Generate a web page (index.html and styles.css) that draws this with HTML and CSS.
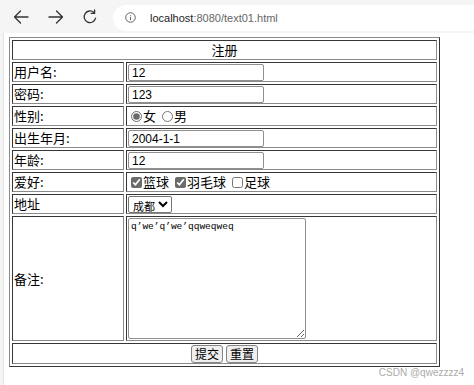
FILE: index.html
```html
<!DOCTYPE html>
<html lang="zh-CN">
<head>
  <meta charset="UTF-8" />
  <title>注册</title>
  <link rel="stylesheet" href="styles.css">
</head>
<body>

<div class="toolbar">
  <svg class="nav-icon back" viewBox="0 0 16 16"><path d="M15 8H1.5 M7.5 2L1.5 8l6 6"/></svg>
  <svg class="nav-icon fwd" viewBox="0 0 16 16"><path d="M1 8h13.5 M8.5 2l6 6-6 6"/></svg>
  <svg class="nav-icon reload" viewBox="0 0 16 16"><path d="M13.6 9.2A5.8 5.8 0 1 1 12 3.6 M12.6 1v3.4H9.2"/></svg>
  <div class="omnibox">
    <svg class="info" viewBox="0 0 12 12"><circle cx="6" cy="6" r="5.2"/><path d="M6 5.2v3.6 M6 3.2v.9"/></svg>
    <span class="host">localhost</span><span class="path">:8080/text01.html</span>
  </div>
</div>

<div class="page">
  <form>
    <table class="reg">
      <tr><td colspan="2" class="title">注册</td></tr>
      <tr>
        <td class="label">用户名:</td>
        <td><input type="text" value="12"></td>
      </tr>
      <tr>
        <td class="label">密码:</td>
        <td><input type="text" value="123"></td>
      </tr>
      <tr>
        <td class="label">性别:</td>
        <td>
          <label><input type="radio" name="sex" checked>女</label>
          <label><input type="radio" name="sex">男</label>
        </td>
      </tr>
      <tr>
        <td class="label">出生年月:</td>
        <td><input type="text" value="2004-1-1"></td>
      </tr>
      <tr>
        <td class="label">年龄:</td>
        <td><input type="text" value="12"></td>
      </tr>
      <tr>
        <td class="label">爱好:</td>
        <td>
          <label><input type="checkbox" checked>篮球</label>
          <label><input type="checkbox" checked>羽毛球</label>
          <label><input type="checkbox">足球</label>
        </td>
      </tr>
      <tr>
        <td class="label">地址</td>
        <td>
          <select>
            <option>成都</option>
            <option>北京</option>
          </select>
        </td>
      </tr>
      <tr>
        <td class="label">备注:</td>
        <td><textarea>q’we’q’we’qqweqweq</textarea></td>
      </tr>
      <tr class="actions">
        <td colspan="2">
          <button type="submit">提交</button>
          <button type="reset">重置</button>
        </td>
      </tr>
    </table>
  </form>

  <div class="watermark">CSDN @qwezzzz4</div>
</div>

</body>
</html>
```

FILE: styles.css
```css
* { box-sizing: border-box; }

body {
  margin: 0;
  height: 385px;
  overflow: hidden;
  font-family: "Noto Sans CJK SC", sans-serif;
  background: #f5f5f5;
  color: #000;
}

/* browser chrome */
.toolbar {
  display: flex;
  align-items: center;
  height: 33px;
  padding-left: 13px;
}

.nav-icon {
  width: 16px;
  height: 16px;
  fill: none;
  stroke: #333;
  stroke-width: 1.3;
  stroke-linecap: round;
  stroke-linejoin: round;
}

.nav-icon.back { margin-right: 19px; }
.nav-icon.fwd { margin-right: 18px; }
.nav-icon.reload { margin-right: 15px; }

.omnibox {
  flex: 1;
  display: flex;
  align-items: center;
  height: 26px;
  margin-top: 2px;
  padding-left: 12px;
  background: #fff;
  border-radius: 13px 0 0 13px;
  font-family: "Liberation Sans", sans-serif;
  font-size: 11px;
}

.info {
  width: 11px;
  height: 11px;
  margin-right: 14px;
  fill: none;
  stroke: #555;
  stroke-width: 1;
}

.host { color: #222; }
.path { color: #666; }

/* page */
.page {
  position: relative;
  height: 352px;
  margin-left: 3px;
  padding: 4px 0 0 5px;
  background: #fff;
  border-left: 1px solid #e2e2e2;
}

.reg {
  width: 431px;
  border-collapse: separate;
  border-spacing: 2px;
  border: 1px outset #8a8a8a;
  font-size: 13px;
  line-height: 18px;
}

.reg td {
  height: 20px;
  padding: 0 1px;
  border: 1px inset #8a8a8a;
}

.reg .label { width: 112px; }

.reg .title { text-align: center; }

.reg input[type="text"] {
  width: 136px;
  height: 17px;
  margin: 1px 0 0;
  padding: 0 3px;
  vertical-align: top;
  font-family: "Liberation Sans", "Noto Sans CJK SC", sans-serif;
  font-size: 12px;
  border: 1px solid #8f8f8f;
  border-radius: 2px;
}

.reg input[type="radio"],
.reg input[type="checkbox"] {
  width: 11px;
  height: 11px;
  margin: 0 1px 0 3px;
  vertical-align: -1px;
  accent-color: #6b6b6b;
}

.reg select {
  height: 17px;
  margin: 1px 0 0;
  padding: 0;
  vertical-align: top;
  font-family: "Noto Sans CJK SC", sans-serif;
  font-size: 11px;
  border: 1px solid #767676;
  border-radius: 2px;
  background: #fff;
}

.reg textarea {
  display: block;
  width: 178px;
  height: 121px;
  margin: 1px 0;
  padding: 2px;
  font-family: "Liberation Mono", monospace;
  font-size: 9.5px;
  line-height: 12px;
  border: 1px solid #8f8f8f;
  border-radius: 2px;
}

.actions td {
  height: 21px;
  text-align: center;
}

.actions button {
  height: 18px;
  margin: 1px 0 0;
  padding: 0 3px;
  vertical-align: top;
  font-family: "Noto Sans CJK SC", sans-serif;
  font-size: 12px;
  line-height: 14px;
  background: #efefef;
  border: 1px solid #858585;
  border-radius: 3px;
}

.watermark {
  position: absolute;
  right: 10px;
  bottom: 7px;
  font-family: "Liberation Sans", sans-serif;
  font-size: 10px;
  color: #ababab;
}
```
